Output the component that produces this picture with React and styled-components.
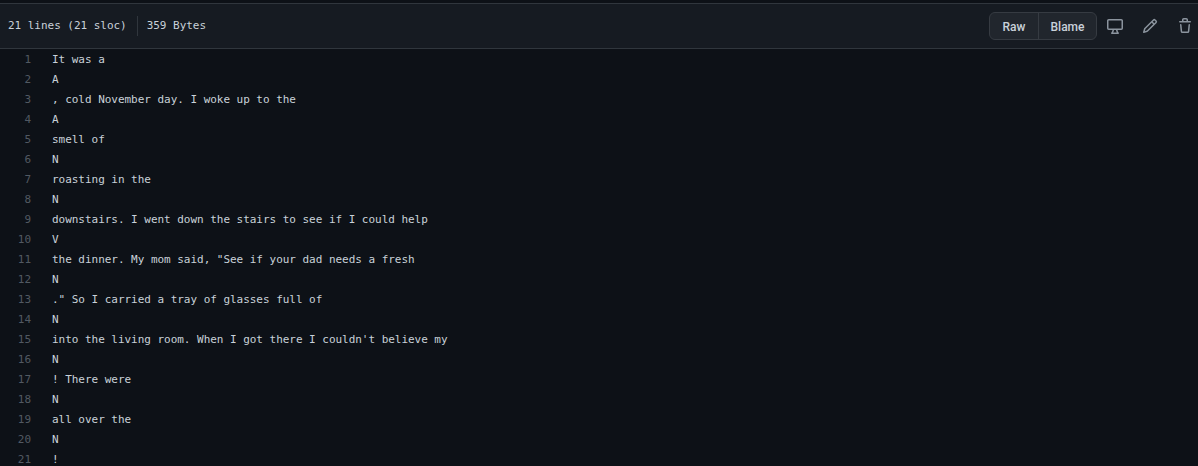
import React from "react";
import styled, { createGlobalStyle } from "styled-components";

const Global = createGlobalStyle`
  html, body { margin: 0; padding: 0; background: #0d1117; }
`;
const Page = styled.div`
  height: 466px;
  overflow: hidden;
  padding-top: 3px;
  box-sizing: border-box;
  background: #0d1117;
`;
const Header = styled.div`
  height: 46px;
  box-sizing: border-box;
  display: flex;
  align-items: center;
  justify-content: space-between;
  padding: 0 5px 0 8px;
  background: #161b22;
  border-top: 1px solid #30363d;
  border-bottom: 1px solid #30363d;
`;
const Info = styled.div`
  display: flex;
  align-items: center;
  font: 11px/20px "DejaVu Sans Mono", monospace;
  letter-spacing: -0.03px;
  color: #c9d1d9;
`;
const InfoItem = styled.span`
  padding-right: 10px;
  & + & {
    padding-left: 9px;
    border-left: 1px solid #30363d;
  }
`;
const Actions = styled.div`
  display: flex;
  align-items: center;
`;
const BtnGroup = styled.div`
  display: flex;
  height: 28px;
  box-sizing: border-box;
  margin-right: 10px;
  background: #21262d;
  border: 1px solid #363b42;
  border-radius: 6px;
`;
const Btn = styled.div`
  display: flex;
  align-items: center;
  justify-content: center;
  box-sizing: border-box;
  width: ${(p) => p.$w}px;
  padding-top: 1px;
  font: 500 12px Roboto, sans-serif;
  color: #c9d1d9;
  & + & {
    border-left: 1px solid #363b42;
  }
`;
const IconBtn = styled.div`
  display: flex;
  width: 16px;
  height: 16px;
  margin-left: ${(p) => p.$gap}px;
  color: #8b949e;
`;
const Code = styled.div`
  display: grid;
  grid-template-columns: 31px 1fr;
  column-gap: 21px;
  padding-top: 1px;
  font: 11px/20px "DejaVu Sans Mono", monospace;
  letter-spacing: -0.03px;
`;
const Num = styled.div`
  text-align: right;
  color: #525962;
`;
const Line = styled.div`
  color: #c9d1d9;
  white-space: pre;
`;

const lines = [
  "It was a", "A", ", cold November day. I woke up to the", "A", "smell of", "N",
  "roasting in the", "N", "downstairs. I went down the stairs to see if I could help", "V",
  'the dinner. My mom said, "See if your dad needs a fresh', "N",
  '." So I carried a tray of glasses full of', "N",
  "into the living room. When I got there I couldn't believe my", "N",
  "! There were", "N", "all over the", "N", "!",
];

const Icon = ({ d }) => (
  <svg width="16" height="16" viewBox="0 0 16 16" fill="currentColor"><path d={d} /></svg>
);

export default function App() {
  return (
    <Page>
      <Global />
      <Header>
        <Info>
          <InfoItem>21 lines (21 sloc)</InfoItem>
          <InfoItem>359 Bytes</InfoItem>
        </Info>
        <Actions>
          <BtnGroup>
            <Btn $w={48}>Raw</Btn>
            <Btn $w={58}>Blame</Btn>
          </BtnGroup>
          <IconBtn $gap={0}>
            <Icon d="M14.25 1c.966 0 1.75.784 1.75 1.75v7.5A1.75 1.75 0 0 1 14.25 12h-3.727c.099 1.041.52 1.872 1.292 2.757A.752.752 0 0 1 11.25 16h-6.5a.75.75 0 0 1-.565-1.243c.772-.885 1.192-1.716 1.292-2.757H1.75A1.75 1.75 0 0 1 0 10.25v-7.5C0 1.784.784 1 1.75 1ZM1.75 2.5a.25.25 0 0 0-.25.25v7.5c0 .138.112.25.25.25h12.5a.25.25 0 0 0 .25-.25v-7.5a.25.25 0 0 0-.25-.25ZM9.018 12H6.982a5.72 5.72 0 0 1-.765 2.5h3.566a5.72 5.72 0 0 1-.765-2.5Z" />
          </IconBtn>
          <IconBtn $gap={19}>
            <Icon d="M11.013 1.427a1.75 1.75 0 0 1 2.474 0l1.086 1.086a1.75 1.75 0 0 1 0 2.474l-8.61 8.61c-.21.21-.47.364-.756.445l-3.251.93a.75.75 0 0 1-.927-.928l.929-3.25c.081-.286.235-.547.445-.758l8.61-8.61Zm.176 4.823L9.75 4.81l-6.286 6.287a.253.253 0 0 0-.064.108l-.558 1.953 1.953-.558a.253.253 0 0 0 .108-.064Zm1.238-3.763a.25.25 0 0 0-.354 0L10.811 3.75l1.439 1.44 1.263-1.263a.25.25 0 0 0 0-.354Z" />
          </IconBtn>
          <IconBtn $gap={19}>
            <Icon d="M11 1.75V3h2.25a.75.75 0 0 1 0 1.5H2.75a.75.75 0 0 1 0-1.5H5V1.75C5 .784 5.784 0 6.75 0h2.5C10.216 0 11 .784 11 1.75ZM4.496 6.675l.66 6.6a.25.25 0 0 0 .249.225h5.19a.25.25 0 0 0 .249-.225l.66-6.6a.75.75 0 0 1 1.492.149l-.66 6.6A1.748 1.748 0 0 1 10.595 15h-5.19a1.75 1.75 0 0 1-1.741-1.575l-.66-6.6a.75.75 0 1 1 1.492-.15ZM6.5 1.75V3h3V1.75a.25.25 0 0 0-.25-.25h-2.5a.25.25 0 0 0-.25.25Z" />
          </IconBtn>
        </Actions>
      </Header>
      <Code>
        {lines.map((t, i) => (
          <React.Fragment key={i}>
            <Num>{i + 1}</Num>
            <Line>{t}</Line>
          </React.Fragment>
        ))}
      </Code>
    </Page>
  );
}
